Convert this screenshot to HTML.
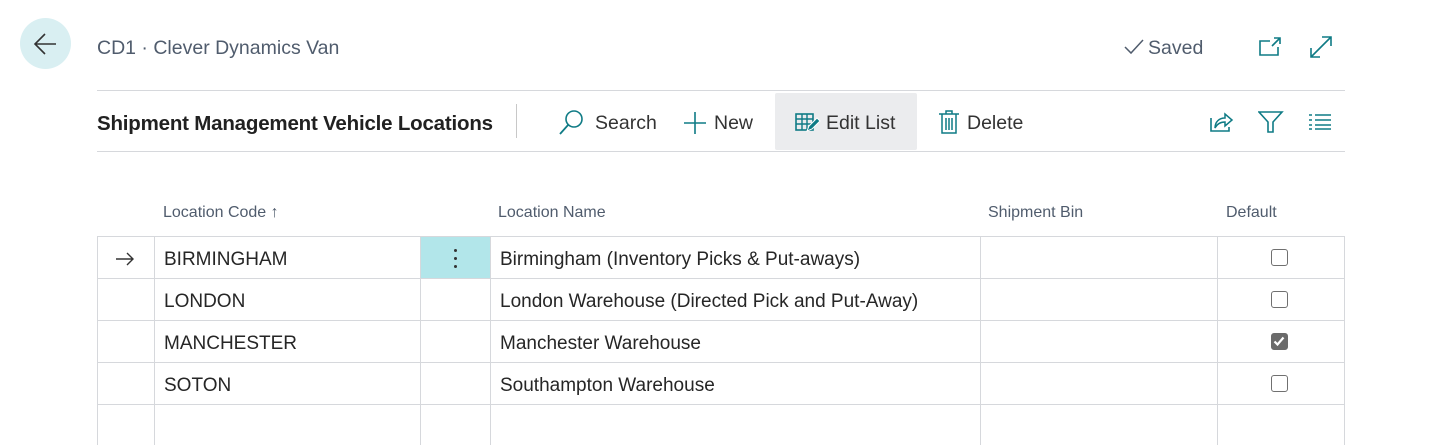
<!DOCTYPE html>
<html><head><style>
body{margin:0;width:1442px;height:445px;background:#fff;font-family:"Liberation Sans",sans-serif;position:relative;overflow:hidden;color:#212121}
.a{position:absolute;white-space:nowrap}
.hl{position:absolute;height:1px;background:#d6d8dc}
.vl{position:absolute;width:1px;background:#d6d8dc}
.tb{font-size:19.5px;color:#333;top:112px}
.hd{font-size:16px;color:#505c6d;top:204px}
.c{font-size:19px;color:#262626}
.cb{position:absolute;left:1271px;width:17px;height:17px;border:1.5px solid #707070;border-radius:3px;box-sizing:border-box}
</style></head><body>
<div class="a" style="left:20px;top:18px;width:51px;height:51px;border-radius:50%;background:#d9eff2"></div>
<svg class="a" style="left:32px;top:32px" width="26" height="24" viewBox="0 0 26 24"><path d="M24 12H3M13 2L3 12l10 10" fill="none" stroke="#333" stroke-width="1.6"/></svg>
<div class="a" style="left:97px;top:37px;font-size:19.5px;color:#505c6d">CD1 · Clever Dynamics Van</div>
<svg class="a" style="left:1123px;top:38px" width="22" height="18"><path d="M2 9l6 6L20 2" fill="none" stroke="#505c6d" stroke-width="1.5"/></svg>
<div class="a" style="left:1148px;top:37px;font-size:19.5px;color:#505c6d">Saved</div>
<svg class="a" style="left:1258px;top:34px" width="28" height="24"><path d="M12 7H2v14h18v-8" fill="none" stroke="#0f7b85" stroke-width="1.6"/><path d="M16 4h6v6M22 4l-8 8" fill="none" stroke="#0f7b85" stroke-width="1.6"/></svg>
<svg class="a" style="left:1308px;top:34px" width="26" height="26"><path d="M3 23L23 3M14 3h9v9M3 14v9h9" fill="none" stroke="#0f7b85" stroke-width="1.6"/></svg>
<div class="hl" style="left:97px;top:90px;width:1248px"></div>
<div class="hl" style="left:97px;top:151px;width:1248px"></div>
<div class="a" style="left:97px;top:112px;font-size:20.5px;font-weight:bold;color:#212121;letter-spacing:-0.2px">Shipment Management Vehicle Locations</div>
<div class="vl" style="left:516px;top:104px;height:34px;background:#c8c8c8"></div>
<svg class="a" style="left:557px;top:108px" width="28" height="28"><circle cx="17" cy="11" r="8" fill="none" stroke="#0f7b85" stroke-width="1.6"/><path d="M11.5 16.5L3 26" stroke="#0f7b85" stroke-width="1.8"/></svg>
<div class="a tb" style="left:595px">Search</div>
<svg class="a" style="left:683px;top:111px" width="24" height="24"><path d="M12 1v22M1 12h22" stroke="#0f7b85" stroke-width="1.6"/></svg>
<div class="a tb" style="left:714px">New</div>
<div class="a" style="left:775px;top:93px;width:142px;height:57px;background:#ebecee;border-radius:2px"></div>
<svg class="a" style="left:795px;top:112px" width="26" height="22"><rect x="1" y="2" width="17" height="16" fill="none" stroke="#0f7b85" stroke-width="1.6"/><path d="M1 7h17M1 12h17M7 2v16M12 2v16" stroke="#0f7b85" stroke-width="1.4"/><path d="M12 19l2-5 8-8 3 3-8 8z" fill="#0f7b85" stroke="#fff" stroke-width="1"/></svg>
<div class="a tb" style="left:826px">Edit List</div>
<svg class="a" style="left:938px;top:110px" width="22" height="25"><path d="M1 4h20M8 4V1h6v3M4 4v19h14V4M8 8v12M11 8v12M14 8v12" fill="none" stroke="#0f7b85" stroke-width="1.5"/></svg>
<div class="a tb" style="left:967px">Delete</div>
<svg class="a" style="left:1209px;top:110px" width="26" height="24"><path d="M2 8v13h18v-4" fill="none" stroke="#0f7b85" stroke-width="1.6"/><path d="M6 18c0-6 4-10 10-10V4l7 6-7 6v-4c-5 0-8 2-10 6z" fill="none" stroke="#0f7b85" stroke-width="1.5"/></svg>
<svg class="a" style="left:1258px;top:110px" width="26" height="24"><path d="M1 2h23l-9 10v10h-5V12z" fill="none" stroke="#0f7b85" stroke-width="1.6"/></svg>
<svg class="a" style="left:1308px;top:113px" width="24" height="18"><path d="M1 2h3M7 2h16M1 7h3M7 7h16M1 12h3M7 12h16M1 16h3M7 16h16" stroke="#0f7b85" stroke-width="1.6"/></svg>
<div class="a hd" style="left:163px">Location Code ↑</div>
<div class="a hd" style="left:498px">Location Name</div>
<div class="a hd" style="left:988px">Shipment Bin</div>
<div class="a hd" style="left:1226px">Default</div>
<div class="a" style="left:421px;top:237px;width:69px;height:41px;background:#b2e6ea"></div>
<div class="hl" style="left:97px;top:236px;width:1248px"></div>
<div class="hl" style="left:97px;top:278px;width:1248px"></div>
<div class="hl" style="left:97px;top:320px;width:1248px"></div>
<div class="hl" style="left:97px;top:362px;width:1248px"></div>
<div class="hl" style="left:97px;top:404px;width:1248px"></div>
<div class="vl" style="left:97px;top:236px;height:209px"></div>
<div class="vl" style="left:154px;top:236px;height:209px"></div>
<div class="vl" style="left:420px;top:236px;height:209px"></div>
<div class="vl" style="left:490px;top:236px;height:209px"></div>
<div class="vl" style="left:980px;top:236px;height:209px"></div>
<div class="vl" style="left:1217px;top:236px;height:209px"></div>
<div class="vl" style="left:1344px;top:236px;height:209px"></div>
<svg class="a" style="left:115px;top:251px" width="20" height="16"><path d="M1 8h17M12 2l6 6-6 6" fill="none" stroke="#333" stroke-width="1.4"/></svg>
<div class="a" style="left:454px;top:249px;width:3px;height:3px;background:#333;border-radius:50%"></div>
<div class="a" style="left:454px;top:257px;width:3px;height:3px;background:#333;border-radius:50%"></div>
<div class="a" style="left:454px;top:265px;width:3px;height:3px;background:#333;border-radius:50%"></div>
<div class="a c" style="left:164px;top:249px">BIRMINGHAM</div>
<div class="a c" style="left:500px;top:249px">Birmingham (Inventory Picks &amp; Put-aways)</div>
<div class="a c" style="left:164px;top:291px">LONDON</div>
<div class="a c" style="left:500px;top:291px">London Warehouse (Directed Pick and Put-Away)</div>
<div class="a c" style="left:164px;top:333px">MANCHESTER</div>
<div class="a c" style="left:500px;top:333px">Manchester Warehouse</div>
<div class="a c" style="left:164px;top:375px">SOTON</div>
<div class="a c" style="left:500px;top:375px">Southampton Warehouse</div>
<div class="cb" style="top:249px"></div>
<div class="cb" style="top:291px"></div>
<div class="cb" style="top:333px;background:#6b6b6b;border-color:#6b6b6b"><svg width="14" height="14" style="position:absolute;left:0;top:0"><path d="M2.5 7.5l3 3 6-7" fill="none" stroke="#fff" stroke-width="2.2"/></svg></div>
<div class="cb" style="top:375px"></div>
</body></html>
